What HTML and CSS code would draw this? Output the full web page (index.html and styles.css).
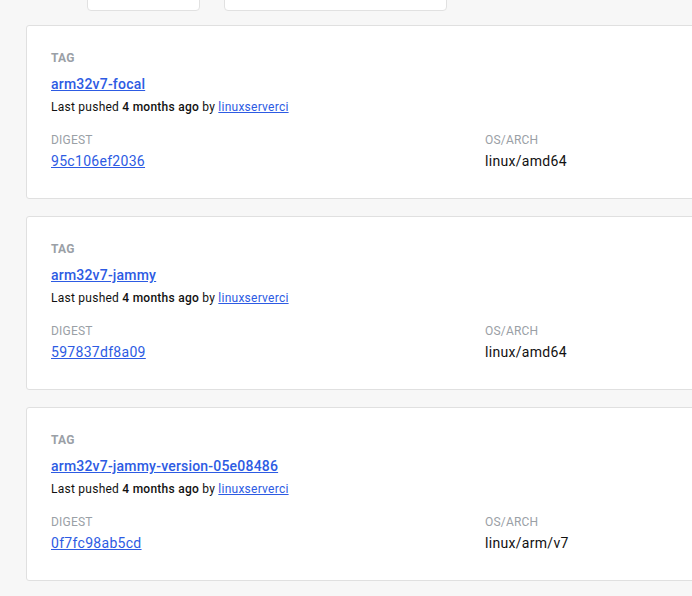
FILE: index.html
```html
<!DOCTYPE html>
<html lang="en">
<head>
    <meta charset="UTF-8">
    <meta name="viewport" content="width=device-width, initial-scale=1.0">
    <title>Tags</title>
    <link rel="stylesheet" href="styles.css">
</head>
<body>
    <div class="top-bar">
        <div class="top-box box-sort"></div>
        <div class="top-box box-filter"></div>
    </div>

    <div class="tag-list">
        <div class="tag-card">
            <div class="label">TAG</div>
            <a href="#" class="tag-name">arm32v7-focal</a>
            <p class="pushed">Last pushed <b>4 months ago</b> by <a href="#">linuxserverci</a></p>
            <div class="details">
                <div>
                    <div class="label light">DIGEST</div>
                    <a href="#" class="digest">95c106ef2036</a>
                </div>
                <div>
                    <div class="label light">OS/ARCH</div>
                    <span class="arch">linux/amd64</span>
                </div>
            </div>
        </div>

        <div class="tag-card">
            <div class="label">TAG</div>
            <a href="#" class="tag-name">arm32v7-jammy</a>
            <p class="pushed">Last pushed <b>4 months ago</b> by <a href="#">linuxserverci</a></p>
            <div class="details">
                <div>
                    <div class="label light">DIGEST</div>
                    <a href="#" class="digest">597837df8a09</a>
                </div>
                <div>
                    <div class="label light">OS/ARCH</div>
                    <span class="arch">linux/amd64</span>
                </div>
            </div>
        </div>

        <div class="tag-card">
            <div class="label">TAG</div>
            <a href="#" class="tag-name">arm32v7-jammy-version-05e08486</a>
            <p class="pushed">Last pushed <b>4 months ago</b> by <a href="#">linuxserverci</a></p>
            <div class="details">
                <div>
                    <div class="label light">DIGEST</div>
                    <a href="#" class="digest">0f7fc98ab5cd</a>
                </div>
                <div>
                    <div class="label light">OS/ARCH</div>
                    <span class="arch">linux/arm/v7</span>
                </div>
            </div>
        </div>
    </div>
</body>
</html>
```

FILE: styles.css
```css
body {
    margin: 0;
    background-color: #f7f7f7;
    font-family: Roboto, "Liberation Sans", sans-serif;
    color: #111;
    overflow: hidden;
}

a {
    color: #2d5be3;
}

.top-bar {
    display: flex;
    padding-left: 87px;
    gap: 24px;
    margin-top: -11px;
}

.top-box {
    height: 20px;
    background-color: #fff;
    border: 1px solid #e1e1e1;
    border-radius: 4px;
}

.box-sort {
    width: 111px;
}

.box-filter {
    width: 221px;
}

.tag-list {
    display: flex;
    flex-direction: column;
    gap: 17px;
    padding: 14px 0 0 26px;
}

.tag-card {
    width: 700px;
    box-sizing: border-box;
    height: 174px;
    background-color: #fff;
    border: 1px solid #e0e0e0;
    border-radius: 3px;
    padding: 24px 24px 0 24px;
}

.label {
    font-size: 12px;
    line-height: 16px;
    font-weight: 700;
    color: #9aa0a6;
    letter-spacing: 0.2px;
}

.label.light {
    font-weight: 400;
}

.tag-name {
    display: inline-block;
    margin-top: 8px;
    font-size: 14px;
    line-height: 20px;
    font-weight: 500;
    letter-spacing: 0.2px;
}

.pushed {
    margin: 5px 0 0 0;
    font-size: 12px;
    line-height: 16px;
    letter-spacing: 0.25px;
}

.pushed b {
    font-weight: 500;
}

.details {
    display: grid;
    grid-template-columns: 434px auto;
    margin-top: 17px;
}

.digest,
.arch {
    display: inline-block;
    margin-top: 3px;
    font-size: 14px;
    line-height: 20px;
    letter-spacing: 0.3px;
}
```
